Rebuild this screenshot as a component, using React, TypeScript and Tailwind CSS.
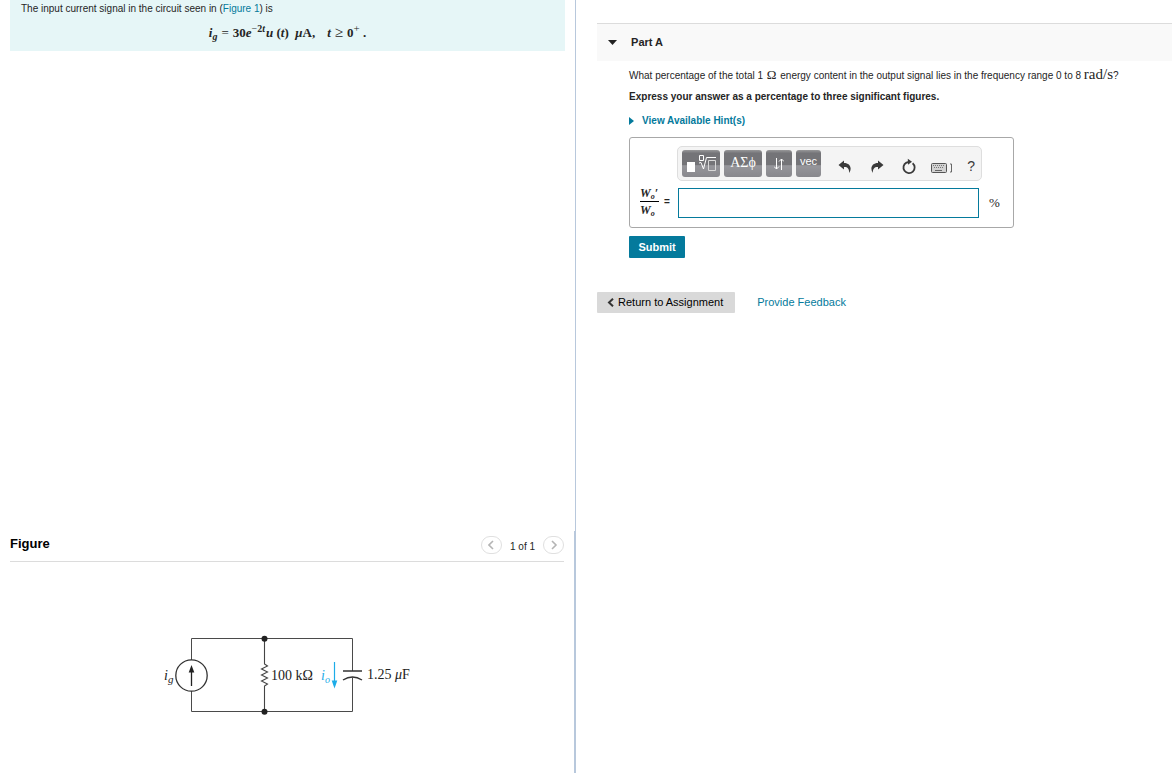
import { useState } from 'react';
import type { ReactNode } from 'react';

const serif = "font-['Liberation_Serif',serif]";

const ToolButton = ({ label, width, children }: { label: string; width: string; children: ReactNode }) => (
  <button
    type="button"
    aria-label={label}
    className={`flex h-[27px] items-center justify-center rounded-[3px] bg-[linear-gradient(#98989a,#747478_12%,#747478_55%,#96969b_58%,#88888d)] text-white ${width}`}
  >
    {children}
  </button>
);

const IconButton = ({ label, children }: { label: string; children: ReactNode }) => (
  <button type="button" aria-label={label} className="flex h-5 w-4 items-center justify-center text-[#3a3a3a]">
    {children}
  </button>
);

const UndoIcon = () => (
  <svg width="14" height="14" viewBox="0 0 14 14" fill="currentColor">
    <path d="M6 0.5 L0.5 5 L6 9.5 V7 C9.5 6.8 11.2 8.5 11.2 13 C14.4 8 12 3 6 3 Z" />
  </svg>
);

const ResetIcon = () => (
  <svg width="16" height="18" viewBox="0 0 16 18" fill="none">
    <path d="M11.6 5.2 A5.6 5.6 0 1 1 5.4 4.6 L8 4" stroke="currentColor" strokeWidth="1.8" />
    <path d="M6.8 0.8 L11 3.8 L7 6.8 Z" fill="currentColor" />
  </svg>
);

const KeyboardIcon = () => (
  <svg width="22" height="12" viewBox="0 0 22 12" fill="none">
    <rect x="0.5" y="1.5" width="15" height="9" rx="1" fill="#d2d2d2" stroke="#555" />
    <path d="M2 3.5 H14 M3 5.5 H13" stroke="#777" strokeDasharray="1 1" />
    <path d="M4 8.5 H11" stroke="#666" />
    <path d="M19 2 H20.5 V10 H19" stroke="#666" />
  </svg>
);

const PagerButton = ({ label, path }: { label: string; path: string }) => (
  <button type="button" aria-label={label} className="flex h-[18px] w-[21px] items-center justify-center rounded-full border border-[#e0e0e0]">
    <svg width="8" height="10" viewBox="0 0 8 10" fill="none" stroke="#b4b4b4" strokeWidth="1.6">
      <path d={path} />
    </svg>
  </button>
);

const Circuit = () => (
  <svg width="246" height="84" viewBox="0 0 246 84" fill="none" stroke="#4a4a4a" className={`overflow-visible text-[14px] ${serif}`}>
    <path d="M27.5 26 V4.5 H188.5 V37 M188.5 43.5 V77.5 H27.5 V57" />
    <circle cx="27.5" cy="41.5" r="15.7" stroke="#333" strokeWidth="1.3" />
    <path d="M27.5 52 V36" stroke="#222" strokeWidth="1.3" />
    <path d="M27.5 31 L30.3 38.5 H24.7 Z" fill="#222" stroke="none" />
    {/* resistor */}
    <path d="M100.5 4.5 V30 L103.5 32 L97.5 35 L103.5 38 L97.5 41 L103.5 44 L97.5 47 L103.5 50 L100.5 52 V77.5" stroke="#444" strokeWidth="1.1" />
    <circle cx="100.5" cy="4.8" r="3" fill="#222" stroke="none" />
    <circle cx="100.5" cy="77.8" r="3" fill="#222" stroke="none" />
    {/* capacitor */}
    <path d="M179 37 H198 M179 46 Q188.5 40 198 46" stroke="#333" strokeWidth="1.4" />
    {/* output current */}
    <path d="M170.5 28 V49" stroke="#1cace8" strokeWidth="1.2" />
    <path d="M170.5 54.5 L167.7 46.5 H173.3 Z" fill="#1cace8" stroke="none" />
    <g stroke="none" fill="#222">
      <text x="0" y="46" fontStyle="italic">i<tspan dy="3" fontSize="11">g</tspan></text>
      <text x="107" y="46">100 kΩ</text>
      <text x="157" y="46" fill="#1cace8" fontStyle="italic">i<tspan dy="3" fontSize="10">o</tspan></text>
      <text x="203" y="45">1.25 <tspan fontStyle="italic">μ</tspan>F</text>
    </g>
  </svg>
);

const Problem = () => (
  <section className="flex-1 border-r border-[#b8c8dc] px-[10px]">
    <div className="h-[51px] bg-[#e6f6f7] px-[11px] pt-[2px] text-[10px]">
      <p className="leading-[14px]">
        The input current signal in the circuit seen in{' '}
        (<a href="#figure" className="text-[#047a9c]">Figure 1</a>) is
      </p>
      <p className={`mt-2 flex justify-center whitespace-pre text-[13px] font-bold leading-[18px] ${serif}`}>
        <span>
          <i>i</i>
          <sub className="text-[10px] leading-none"><i>g</i></sub>
          <span className="mx-1 font-normal">=</span>30<i>e</i>
          <sup className="mr-px text-[10px] leading-none"><span className="font-normal">−</span>2<i>t</i></sup>
          <i>u</i> (<i>t</i>)  <i>μ</i>A,<i className="ml-3">t</i>
          <span className="mx-1 text-[15px] font-normal leading-none">≥</span>0
          <sup className="text-[11px] font-normal leading-none">+</sup> .
        </span>
      </p>
    </div>
  </section>
);

const Figure = () => (
  <section id="figure" className="h-[242px] border-r-2 border-[#b8c8dc] pl-[10px] pr-[10px]">
    <div className="flex h-[31px] items-center justify-between border-b border-[#dcdcdc]">
      <h2 className="pb-1 text-[13px] font-bold leading-4 text-black">Figure</h2>
      <div className="flex items-center gap-2 pb-[2px] text-[10px]">
        <PagerButton label="Previous figure" path="M5 1 L1 5 L5 9" />
        <span className="pt-[2px]">1 of 1</span>
        <PagerButton label="Next figure" path="M2 1 L6 5 L2 9" />
      </div>
    </div>
    <div className="flex justify-center pt-[72px]">
      <Circuit />
    </div>
  </section>
);

const AnswerBox = () => {
  const [answer, setAnswer] = useState('');

  return (
    <div className="mt-2 flex h-[91px] w-[385px] items-end rounded-[3px] border border-[#a8a8a8] pb-[9px] pl-[10px]">
      <label htmlFor="answer" className={`flex w-[38px] items-center gap-[5px] text-[12px] font-bold italic ${serif}`}>
        <span className="w-[19px] leading-4">
          <span className="block h-[17px] whitespace-nowrap border-b border-black">W<sub className="text-[8px] leading-none">o</sub>′</span>
          <span className="block h-4">W<sub className="text-[8px] leading-none">o</sub></span>
        </span>
        <span className="font-['Liberation_Sans',sans-serif] text-[10px] not-italic">=</span>
      </label>
      <div>
        <div className="mb-[7px] -ml-px flex h-[35px] w-[305px] items-center rounded-[5px] border border-[#dedede] bg-[#f4f4f4] pl-1">
          <div className="flex gap-1">
            <ToolButton label="Templates" width="w-[38px]">
              <svg width="30" height="20" viewBox="0 0 30 20" fill="none" stroke="white">
                <path d="M1 8 H9 V18 H1 Z" fill="white" stroke="none" />
                <path d="M13.5 1.5 H17.5 V6.5 H13.5 Z M13 9 L15 8.5 L17.5 15 L20.5 3.5 H30" />
                <path d="M22.5 6.5 H29.5 V16.5 H22.5 Z" stroke="#d8d8d8" />
              </svg>
            </ToolButton>
            <ToolButton label="Symbols" width="w-[38px]">
              <span className={`pb-[2px] text-[14px] ${serif}`}>ΑΣϕ</span>
            </ToolButton>
            <ToolButton label="Subscript and superscript" width="w-[26px]">
              <svg width="10" height="12" viewBox="0 0 10 12" fill="none" stroke="white">
                <path d="M2.5 0 V11 M0 8.5 L2.5 11 L5 8.5 M7.5 12 V1 M5 3.5 L7.5 1 L10 3.5" />
              </svg>
            </ToolButton>
            <ToolButton label="Vector" width="w-[25px]">
              <span className="pb-1 text-[11px]">vec</span>
            </ToolButton>
          </div>
          <div className="ml-4 flex items-center gap-4 pt-[6px]">
            <IconButton label="Undo"><UndoIcon /></IconButton>
            <IconButton label="Redo"><span className="-scale-x-100"><UndoIcon /></span></IconButton>
            <IconButton label="Reset"><ResetIcon /></IconButton>
          </div>
          <div className="ml-[14px] flex items-center gap-[10px] pt-[8px]">
            <button type="button" aria-label="Keyboard shortcuts"><KeyboardIcon /></button>
            <IconButton label="Help"><span className="pb-[2px] text-[14px]">?</span></IconButton>
          </div>
        </div>
        <div className="flex items-center">
          <input
            id="answer"
            value={answer}
            onChange={(e) => setAnswer(e.target.value)}
            className="h-[30px] w-[301px] border border-[#047a9c] bg-white px-2 text-[12px] outline-none"
          />
          <span className={`ml-[10px] text-[13px] ${serif}`}>%</span>
        </div>
      </div>
    </div>
  );
};

const PartA = () => (
  <section className="pl-[21px] pt-[23px]">
    <h2 className="flex h-[38px] items-center gap-[14px] border-t border-[#dcdcdc] bg-[#f9f9f9] pl-[11px] text-[11px] font-bold">
      <svg width="9" height="5" viewBox="0 0 9 5" fill="#222"><path d="M0 0 H9 L4.5 5 Z" /></svg>
      Part A
    </h2>
    <div className="pl-8 pt-[6px] text-[10px]">
      <p className="leading-[18px]">
        What percentage of the total 1 <span className={`mx-px text-[13px] leading-none ${serif}`}>Ω</span> energy content in the output
        signal lies in the frequency range 0 to 8 <span className={`text-[15px] leading-none ${serif}`}>rad/s</span>?
      </p>
      <p className="mt-1 font-bold leading-[16px]">Express your answer as a percentage to three significant figures.</p>
      <a href="#hints" className="mt-2 flex items-center gap-2 font-bold leading-4 text-[#047a9c]">
        <svg width="5" height="8" viewBox="0 0 5 8" fill="currentColor"><path d="M0 0 L5 4 L0 8 Z" /></svg>
        View Available Hint(s)
      </a>
      <AnswerBox />
      <button type="submit" className="mt-2 h-[22px] w-14 rounded-[1px] bg-[#047a9c] text-[11px] font-bold text-white">
        Submit
      </button>
    </div>
    <div className="mt-[34px] flex items-center gap-[22px] text-[11px]">
      <button type="button" className="flex h-[21px] items-center gap-1 rounded-[1px] bg-[#d9d9d9] pl-[10px] pr-3 text-black">
        <svg width="7" height="9" viewBox="0 0 7 9" fill="none" stroke="#333" strokeWidth="2"><path d="M6 0.7 L2 4.5 L6 8.3" /></svg>
        Return to Assignment
      </button>
      <a href="#feedback" className="text-[#047a9c]">Provide Feedback</a>
    </div>
  </section>
);

const App = () => (
  <main className="grid min-h-screen grid-cols-[29fr_30fr] bg-white font-['Liberation_Sans',Arial,sans-serif] text-[#252525]">
    <div className="flex flex-col">
      <Problem />
      <Figure />
    </div>
    <PartA />
  </main>
);

export default App;
